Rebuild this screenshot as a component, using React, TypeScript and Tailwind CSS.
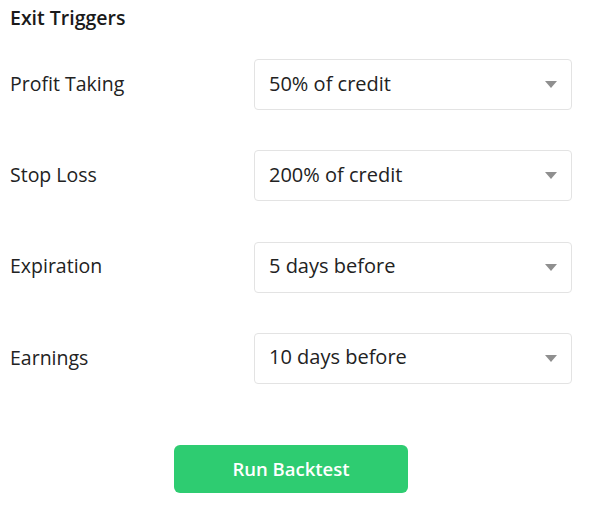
const rows = [
  { label: 'Profit Taking', value: '50% of credit' },
  { label: 'Stop Loss', value: '200% of credit' },
  { label: 'Expiration', value: '5 days before' },
  { label: 'Earnings', value: '10 days before' },
]

function Caret() {
  return (
    <svg width="12" height="7" viewBox="0 0 12 7" className="text-[#8f8f8f]">
      <path d="M0 0h12L6 7z" fill="currentColor" />
    </svg>
  )
}

export default function App() {
  return (
    <div className="min-h-screen w-[590px] bg-white font-['Open_Sans',sans-serif] text-[#222]">
      <div className="pl-[10px] pr-[18px] pt-[5px]">
        <h2 className="text-[19.5px] font-semibold leading-[26px] text-[#1a1a1a]">Exit Triggers</h2>
        <div className="mt-[28px] flex flex-col gap-[40.3px]">
          {rows.map((r) => (
            <div key={r.label} className="flex items-center">
              <div className="w-[244px] pb-[2px] text-[19.5px] text-[#222]">{r.label}</div>
              <div className="flex h-[51px] flex-1 items-center justify-between rounded-[4px] border border-[#e3e3e3] pl-[14px] pr-[14px]">
                <span className="pb-[2px] text-[20px] text-[#222]">{r.value}</span>
                <Caret />
              </div>
            </div>
          ))}
        </div>
        <div className="mt-[61px] flex justify-center">
          <button className="h-[48px] w-[234px] rounded-[6px] bg-[#2ecc71] text-[18.5px] font-semibold text-white">
            Run Backtest
          </button>
        </div>
      </div>
    </div>
  )
}
